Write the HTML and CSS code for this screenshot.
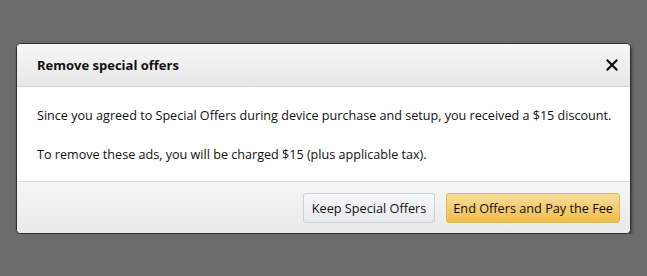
FILE: index.html
```html
<!DOCTYPE html>
<html lang="en">
<head>
  <meta charset="UTF-8">
  <title>Remove special offers</title>
  <link rel="stylesheet" href="styles.css">
</head>
<body>
  <div class="modal">
    <div class="modal-header">
      <h4 class="modal-title">Remove special offers</h4>
      <button class="close-btn" aria-label="Close">
        <svg width="12" height="12" viewBox="0 0 12 12"><path d="M1.5 1.5L10.5 10.5M10.5 1.5L1.5 10.5" stroke="#111" stroke-width="2.2" stroke-linecap="square"/></svg>
      </button>
    </div>
    <div class="modal-body">
      <p>Since you agreed to Special Offers during device purchase and setup, you received a $15 discount.</p>
      <p>To remove these ads, you will be charged $15 (plus applicable tax).</p>
    </div>
    <div class="modal-footer">
      <button class="btn btn-secondary">Keep Special Offers</button>
      <button class="btn btn-primary">End Offers and Pay the Fee</button>
    </div>
  </div>
</body>
</html>
```

FILE: styles.css
```css
html, body {
  margin: 0; padding: 0;
  background: #6b6c6b;
  font-family: "Open Sans", Arial, sans-serif;
  color: #111;
}

body {
  padding: 43px 16px 0 16px;
}

.modal {
  width: 613px;
  background: #fff;
  border: 1px solid #2e2f2e;
  border-radius: 5px;
  box-shadow: 1px 2px 3px rgba(0,0,0,0.45);
  overflow: hidden;
}

.modal-header {
  display: flex;
  align-items: center;
  justify-content: space-between;
  height: 42px;
  padding: 0 12px 0 20px;
  background: linear-gradient(#f7f7f7, #e7e7e7);
  border-bottom: 1px solid #d4d4d4;
}

.modal-title {
  margin: 0;
  font-size: 13px;
  font-weight: 700;
}

.close-btn {
  border: none;
  background: none;
  padding: 0;
  display: flex;
  cursor: pointer;
}

.modal-body {
  padding: 20px 20px 17px 20px;
  font-size: 12.6px;
}

.modal-body p {
  margin: 0 0 21px 0;
  line-height: 18px;
  white-space: nowrap;
}

.modal-body p:last-child {
  margin-bottom: 0;
}

.modal-footer {
  display: flex;
  justify-content: flex-end;
  gap: 11px;
  padding: 11px 10px 10px 20px;
  background: linear-gradient(#f5f5f5, #eaeaea);
  border-top: 1px solid #dcdcdc;
}

.btn {
  font-family: "Open Sans", Arial, sans-serif;
  font-size: 12.7px;
  color: #111;
  height: 30px;
  padding: 0 6px;
  border-radius: 3px;
  cursor: pointer;
}

.btn-secondary {
  padding: 0 8px;
  background: linear-gradient(#f7f8fa, #e7e9ec);
  border: 1px solid #cdd0d5;
}

.btn-primary {
  background: linear-gradient(#f7dca0, #efbe45);
  border: 1px solid #dfb65a;
}
```
